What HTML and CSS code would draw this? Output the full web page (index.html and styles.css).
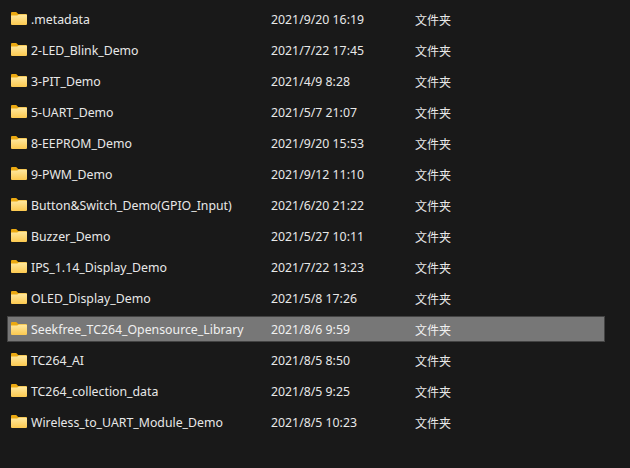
FILE: index.html
```html
<!DOCTYPE html>
<html lang="zh">
<head>
<meta charset="utf-8">
<title>文件列表</title>
<link rel="stylesheet" href="styles.css">
</head>
<body>
<svg class="defs" width="0" height="0" aria-hidden="true">
  <defs>
    <linearGradient id="fg" x1="0" y1="0" x2="0" y2="1">
      <stop offset="0" stop-color="#ffe9a0"/>
      <stop offset="1" stop-color="#fcc94f"/>
    </linearGradient>
    <symbol id="folder" viewBox="0 0 16 14">
      <path d="M0 2a1 1 0 0 1 1-1h4.2l2 2H15a1 1 0 0 1 1 1v2H0z" fill="#eba911"/>
      <path d="M0 4.5h6.2l1.6-1H15a1 1 0 0 1 1 1V13a1 1 0 0 1-1 1H1a1 1 0 0 1-1-1z" fill="url(#fg)"/>
    </symbol>
  </defs>
</svg>
<ul class="list">
  <li class="row"><span class="name"><svg class="icon"><use href="#folder"/></svg>.metadata</span><span class="date">2021/9/20 16:19</span><span class="type">文件夹</span></li>
  <li class="row"><span class="name"><svg class="icon"><use href="#folder"/></svg>2-LED_Blink_Demo</span><span class="date">2021/7/22 17:45</span><span class="type">文件夹</span></li>
  <li class="row"><span class="name"><svg class="icon"><use href="#folder"/></svg>3-PIT_Demo</span><span class="date">2021/4/9 8:28</span><span class="type">文件夹</span></li>
  <li class="row"><span class="name"><svg class="icon"><use href="#folder"/></svg>5-UART_Demo</span><span class="date">2021/5/7 21:07</span><span class="type">文件夹</span></li>
  <li class="row"><span class="name"><svg class="icon"><use href="#folder"/></svg>8-EEPROM_Demo</span><span class="date">2021/9/20 15:53</span><span class="type">文件夹</span></li>
  <li class="row"><span class="name"><svg class="icon"><use href="#folder"/></svg>9-PWM_Demo</span><span class="date">2021/9/12 11:10</span><span class="type">文件夹</span></li>
  <li class="row"><span class="name"><svg class="icon"><use href="#folder"/></svg>Button&amp;Switch_Demo(GPIO_Input)</span><span class="date">2021/6/20 21:22</span><span class="type">文件夹</span></li>
  <li class="row"><span class="name"><svg class="icon"><use href="#folder"/></svg>Buzzer_Demo</span><span class="date">2021/5/27 10:11</span><span class="type">文件夹</span></li>
  <li class="row"><span class="name"><svg class="icon"><use href="#folder"/></svg>IPS_1.14_Display_Demo</span><span class="date">2021/7/22 13:23</span><span class="type">文件夹</span></li>
  <li class="row"><span class="name"><svg class="icon"><use href="#folder"/></svg>OLED_Display_Demo</span><span class="date">2021/5/8 17:26</span><span class="type">文件夹</span></li>
  <li class="row selected"><span class="name"><svg class="icon"><use href="#folder"/></svg>Seekfree_TC264_Opensource_Library</span><span class="date">2021/8/6 9:59</span><span class="type">文件夹</span></li>
  <li class="row"><span class="name"><svg class="icon"><use href="#folder"/></svg>TC264_AI</span><span class="date">2021/8/5 8:50</span><span class="type">文件夹</span></li>
  <li class="row"><span class="name"><svg class="icon"><use href="#folder"/></svg>TC264_collection_data</span><span class="date">2021/8/5 9:25</span><span class="type">文件夹</span></li>
  <li class="row"><span class="name"><svg class="icon"><use href="#folder"/></svg>Wireless_to_UART_Module_Demo</span><span class="date">2021/8/5 10:23</span><span class="type">文件夹</span></li>
</ul>
</body>
</html>
```
FILE: styles.css
```css
html, body {
  margin: 0;
  height: 100%;
  background: #191919;
  overflow: hidden;
}
.defs {
  display: block;
  height: 0;
}
.list {
  list-style: none;
  margin: 0;
  padding: 6px 25px 0 7px;
  display: flex;
  flex-direction: column;
  gap: 5px;
  font-family: "Noto Sans", "Noto Sans CJK SC", sans-serif;
  font-size: 12.3px;
  color: #e8e8e8;
}
.row {
  box-sizing: border-box;
  height: 26px;
  display: flex;
  align-items: center;
  border: 1px solid transparent;
  white-space: nowrap;
}
.selected {
  background: #777777;
  border-color: #434343;
  color: #f0f0f0;
}
.name {
  width: 260px;
  padding-left: 3px;
  display: flex;
  align-items: center;
  gap: 4px;
}
.icon {
  width: 16px;
  height: 14px;
  flex: none;
  margin-top: -3px;
}
.date {
  width: 144px;
}
.type {
  font-family: "Noto Sans CJK SC", sans-serif;
  font-size: 12px;
}
```
